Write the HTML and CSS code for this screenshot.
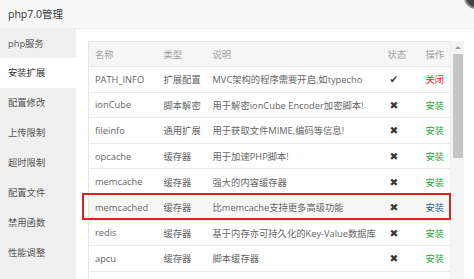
FILE: index.html
```html
<!DOCTYPE html>
<html>
<head>
<meta charset="utf-8">
<link rel="stylesheet" href="styles.css">
</head>
<body>
<div class="layer">
  <div class="title">php7.0管理</div>
  <span class="close"></span>
  <div class="body">
    <ul class="side">
      <li>php服务</li>
      <li class="on">安装扩展</li>
      <li>配置修改</li>
      <li>上传限制</li>
      <li>超时限制</li>
      <li>配置文件</li>
      <li>禁用函数</li>
      <li>性能调整</li>
    </ul>
    <div class="main">
      <div class="tablewrap">
        <table class="tbl">
          <colgroup><col class="c1"><col class="c2"><col class="c3"><col class="c4"><col class="c5"></colgroup>
          <thead>
            <tr><th>名称</th><th>类型</th><th>说明</th><th>状态</th><th>操作</th></tr>
          </thead>
          <tbody>
            <tr><td>PATH_INFO</td><td>扩展配置</td><td>MVC架构的程序需要开启,如typecho</td><td class="st">✔</td><td><a class="red">关闭</a></td></tr>
            <tr><td>ionCube</td><td>脚本解密</td><td>用于解密ionCube Encoder加密脚本!</td><td class="st">✖</td><td><a class="green">安装</a></td></tr>
            <tr><td>fileinfo</td><td>通用扩展</td><td>用于获取文件MIME,编码等信息!</td><td class="st">✖</td><td><a class="green">安装</a></td></tr>
            <tr><td>opcache</td><td>缓存器</td><td>用于加速PHP脚本!</td><td class="st">✖</td><td><a class="green">安装</a></td></tr>
            <tr><td>memcache</td><td>缓存器</td><td>强大的内容缓存器</td><td class="st">✖</td><td><a class="green">安装</a></td></tr>
            <tr class="hover"><td>memcached</td><td>缓存器</td><td>比memcache支持更多高级功能</td><td class="st">✖</td><td><a class="blue">安装</a></td></tr>
            <tr><td>redis</td><td>缓存器</td><td>基于内存亦可持久化的Key-Value数据库</td><td class="st">✖</td><td><a class="green">安装</a></td></tr>
            <tr><td>apcu</td><td>缓存器</td><td>脚本缓存器</td><td class="st">✖</td><td><a class="green">安装</a></td></tr>
            <tr><td>&nbsp;</td><td></td><td></td><td></td><td></td></tr>
          </tbody>
        </table>
      </div>
      <div class="scroll">
        <div class="arrow"></div>
        <div class="thumb"></div>
      </div>
      <div class="mark"></div>
    </div>
  </div>
</div>
</body>
</html>
```
FILE: styles.css
```css
* { box-sizing: border-box; }
html, body { margin: 0; padding: 0; background: #fff; }
body {
  width: 474px; height: 279px; overflow: hidden;
  font-family: "Open Sans", "Noto Sans CJK SC", sans-serif;
  font-size: 9.3px; color: #666;
}
.layer { position: relative; width: 474px; height: 279px; overflow: hidden; display: flex; flex-direction: column; }
.title {
  height: 29px; line-height: 28px; padding-left: 8px;
  background: #f8f8f8; border-bottom: 1px solid #f0f0f0;
  font-size: 10.5px; color: #333; flex: none;
}
.close {
  position: absolute; right: -14px; top: -15px;
  width: 24px; height: 24px; border-radius: 50%;
  background: #444; border: 2px solid #888;
}
.body { flex: 1; display: flex; min-height: 0; }
.side {
  list-style: none; margin: 0; padding: 0;
  width: 76px; background: #f0f0f0; flex: none;
}
.side li {
  height: 30px; line-height: 30px; padding-left: 8px;
  color: #555; font-size: 9.3px;
}
.side li:first-child { height: 29px; line-height: 29px; }
.side li.on { background: #fff; color: #333; }
.main { position: relative; flex: 1; display: flex; padding: 12px 10px 0 12px; min-width: 0; }
.tablewrap { width: 362px; flex: none; overflow: hidden; }
.scroll { width: 14px; flex: none; background: #f4f4f4; border-left: 1px solid #eee; padding: 0 2px; }
.arrow {
  width: 0; height: 0; margin: 5px auto 5px;
  border-left: 3px solid transparent; border-right: 3px solid transparent;
  border-bottom: 3px solid #999;
}
.thumb { height: 104px; background: #c6c6c6; width: 10px; }
.tbl {
  border-collapse: collapse; table-layout: fixed; width: 362px;
  border: 1px solid #e6e6e6;
}
.c1 { width: 69px; } .c2 { width: 49px; } .c3 { width: 175px; } .c4 { width: 38px; } .c5 { width: 31px; }
.tbl th {
  height: 25px; background: #f6f6f6; color: #a0a0a0; font-weight: normal;
  text-align: left; padding: 0 6px; border-bottom: 1px solid #e6e6e6; white-space: nowrap;
}
.tbl td {
  height: 25.6px; padding: 0 6px; border-bottom: 1px solid #ebebeb;
  white-space: nowrap; overflow: hidden; color: #666;
}
.tbl td.st { color: #3a3a3a; padding-left: 8px; font-family: "DejaVu Sans", sans-serif; font-size: 10.5px; }
.tbl td:last-child, .tbl th:last-child { text-align: right; padding-right: 7px; }
.tbl tr.hover td { background: #f6f6f6; }
a { text-decoration: none; }
.red { color: #f22; }
.green { color: #20a53a; }
.blue { color: #1f5f98; }
.mark {
  position: absolute; left: 6px; top: 164px; width: 369px; height: 27px;
  border: 2px solid #dd2222;
}
```
